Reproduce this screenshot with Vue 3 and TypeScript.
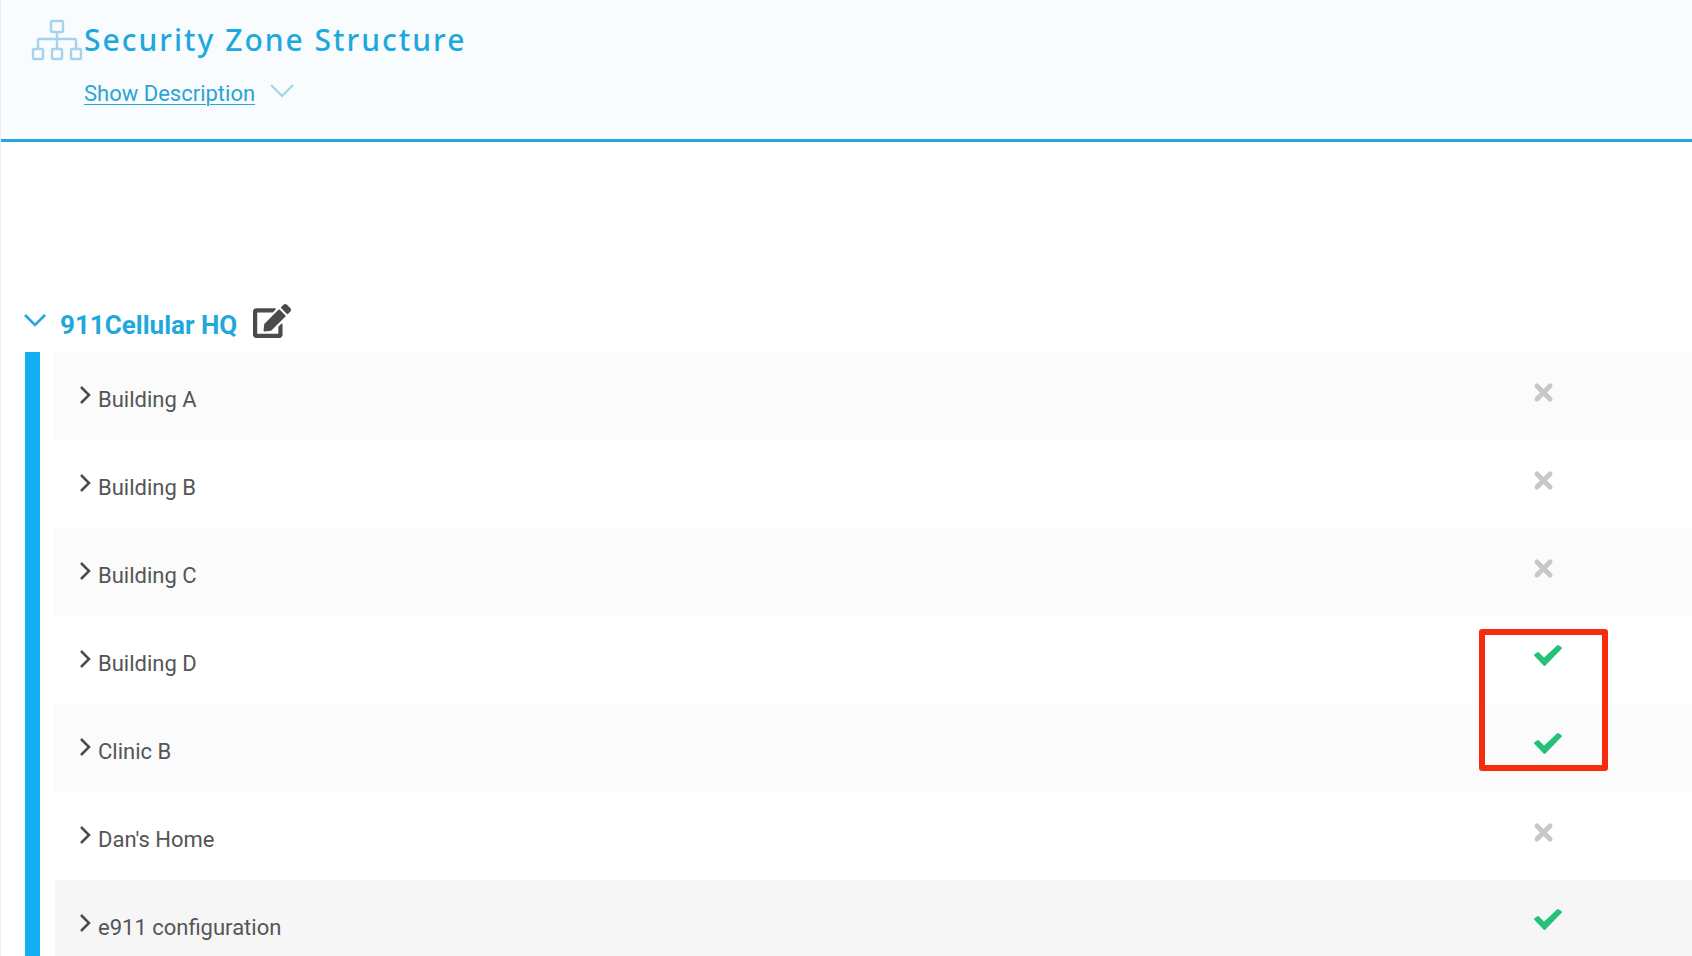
<script setup lang="ts">
import { ref } from 'vue'

interface Zone {
  name: string
  enabled: boolean
  highlighted?: boolean
  active?: boolean
}

const zones = ref<Zone[]>([
  { name: 'Building A', enabled: false },
  { name: 'Building B', enabled: false },
  { name: 'Building C', enabled: false },
  { name: 'Building D', enabled: true, highlighted: true },
  { name: 'Clinic B', enabled: true },
  { name: "Dan's Home", enabled: false },
  { name: 'e911 configuration', enabled: true, active: true },
])
</script>

<template>
  <div class="page">
    <header class="header">
      <svg class="org-icon" viewBox="0 0 50 40" aria-hidden="true">
        <rect x="19" y="1" width="12" height="11" rx="1" />
        <rect x="1" y="29" width="10" height="10" rx="1" />
        <rect x="20" y="29" width="10" height="10" rx="1" />
        <rect x="39" y="29" width="10" height="10" rx="1" />
        <path d="M25 12V29M6 29V20Q6 19 7 19H43Q44 19 44 20V29" />
      </svg>
      <div class="heading">
        <h1>Security Zone Structure</h1>
        <div class="description">
          <a href="#description">Show Description</a>
          <svg class="description-chevron" viewBox="0 0 24 13" aria-hidden="true">
            <path d="M1 1L12 12L23 1" />
          </svg>
        </div>
      </div>
    </header>

    <main class="tree">
      <div class="root">
        <button class="root-toggle" type="button" aria-expanded="true">
          <svg class="root-chevron" viewBox="0 0 22 13" aria-hidden="true">
            <path d="M1 1L11 11L21 1" />
          </svg>
          <span>911Cellular HQ</span>
        </button>
        <button class="edit" type="button" aria-label="Edit 911Cellular HQ">
          <svg viewBox="0 0 576 512" aria-hidden="true">
            <path d="M402.6 83.2l90.2 90.2c3.8 3.8 3.8 10 0 13.8L274.4 405.6l-92.8 10.3c-12.4 1.4-22.9-9.1-21.5-21.5l10.3-92.8L388.8 83.2c3.8-3.8 10-3.8 13.8 0zm162-22.9l-48.8-48.8c-15.2-15.2-39.9-15.2-55.2 0l-35.4 35.4c-3.8 3.8-3.8 10 0 13.8l90.2 90.2c3.8 3.8 10 3.8 13.8 0l35.4-35.4c15.2-15.3 15.2-40 0-55.2zM384 346.2V448H64V128h229.8c3.2 0 6.2-1.3 8.5-3.5l40-40c7.6-7.6 2.2-20.5-8.5-20.5H48C21.5 64 0 85.5 0 112v352c0 26.5 21.5 48 48 48h352c26.5 0 48-21.5 48-48V306.2c0-10.7-12.9-16-20.5-8.5l-40 40c-2.2 2.3-3.5 5.3-3.5 8.5z" />
          </svg>
        </button>
      </div>

      <ul class="zones">
        <li v-for="zone in zones" :key="zone.name" class="zone" :class="{ active: zone.active }">
          <button class="zone-toggle" type="button" aria-expanded="false">
            <svg class="zone-chevron" viewBox="0 0 12 20" aria-hidden="true">
              <path d="M2 2L10 10L2 18" />
            </svg>
            <span>{{ zone.name }}</span>
          </button>
          <span class="status">
            <svg v-if="zone.enabled" class="check" viewBox="0 0 28 20" role="img" aria-label="Enabled">
              <path d="M1 9L4 7L10 13L24 0L27 2L10.5 19Z" />
            </svg>
            <svg v-else class="cross" viewBox="0 0 20 20" role="img" aria-label="Disabled">
              <path d="M3 4L16 17M16 4L3 17" />
            </svg>
          </span>
          <span v-if="zone.highlighted" class="highlight"></span>
        </li>
      </ul>
    </main>
  </div>
</template>

<style>
body {
  margin: 0;
  background: #fff;
}
</style>

<style scoped>
.page {
  border-left: 1px solid #eeeff0;
  font-family: Roboto, "Liberation Sans", sans-serif;
  font-size: 22px;
  color: #555;
}

button {
  padding: 0;
  border: 0;
  background: none;
  font: inherit;
  color: inherit;
  cursor: pointer;
}

svg {
  display: block;
  flex: none;
  overflow: visible;
}

.header {
  display: flex;
  align-items: flex-start;
  gap: 2px;
  padding: 20px 31px 31px;
  border-bottom: 3px solid #22a7d8;
  background: #f8fcff;
}

.org-icon {
  width: 50px;
  height: 40px;
  fill: none;
  stroke: #a5d3ee;
  stroke-width: 2.4;
}

h1 {
  margin: 0;
  font-family: "Noto Sans", "Open Sans", sans-serif;
  font-size: 30px;
  font-weight: 500;
  line-height: 40px;
  letter-spacing: 2px;
  color: #1fa8dc;
}

.description {
  display: flex;
  gap: 15px;
  margin-top: 20px;
  line-height: 28px;
}

.description a {
  color: #2ba5d3;
  text-decoration-thickness: 1px;
  text-underline-offset: 3px;
}

.description-chevron {
  width: 24px;
  height: 13px;
  margin-top: 4px;
  fill: none;
  stroke: #a3d3e6;
  stroke-width: 2;
}

.tree {
  padding: 162px 0 0 23px;
}

.root {
  display: flex;
  align-items: flex-start;
  gap: 16px;
  height: 48px;
}

.root-toggle {
  display: flex;
  gap: 14px;
  font-size: 26px;
  font-weight: 700;
  line-height: 42px;
  color: #1fa8dc;
}

.root-chevron {
  width: 22px;
  height: 13px;
  margin-top: 10px;
  fill: none;
  stroke: #1fa8dc;
  stroke-width: 2.6;
}

.edit svg {
  width: 38px;
  height: 34px;
  fill: #4b4b4b;
}

.zones {
  margin: 0 0 0 1px;
  padding: 0 0 0 15px;
  border-left: 15px solid #14aff0;
  list-style: none;
}

.zone {
  position: relative;
  display: grid;
  grid-template-columns: 1fr 158px;
  align-items: start;
  height: 88px;
}

.zone:nth-child(odd) {
  background: #fbfbfb;
}

.zone.active {
  background: #f6f6f6;
}

.zone-toggle {
  display: flex;
  gap: 7px;
  padding: 33px 0 0 24px;
  line-height: 30px;
}

.zone-chevron {
  width: 12px;
  height: 20px;
  fill: none;
  stroke: #4b4b4b;
  stroke-width: 2.5;
}

.status {
  padding-top: 30px;
}

.check {
  width: 28px;
  height: 20px;
  fill: #27c07a;
  stroke: #27c07a;
  stroke-width: 2;
  stroke-linejoin: round;
}

.cross {
  width: 20px;
  height: 20px;
  fill: none;
  stroke: #c8c8c8;
  stroke-width: 5;
  stroke-linecap: round;
}

.highlight {
  position: absolute;
  z-index: 1;
  top: 13px;
  right: 84px;
  box-sizing: border-box;
  width: 129px;
  height: 142px;
  border: 6px solid #f52d0c;
  border-radius: 3px;
  pointer-events: none;
}
</style>
